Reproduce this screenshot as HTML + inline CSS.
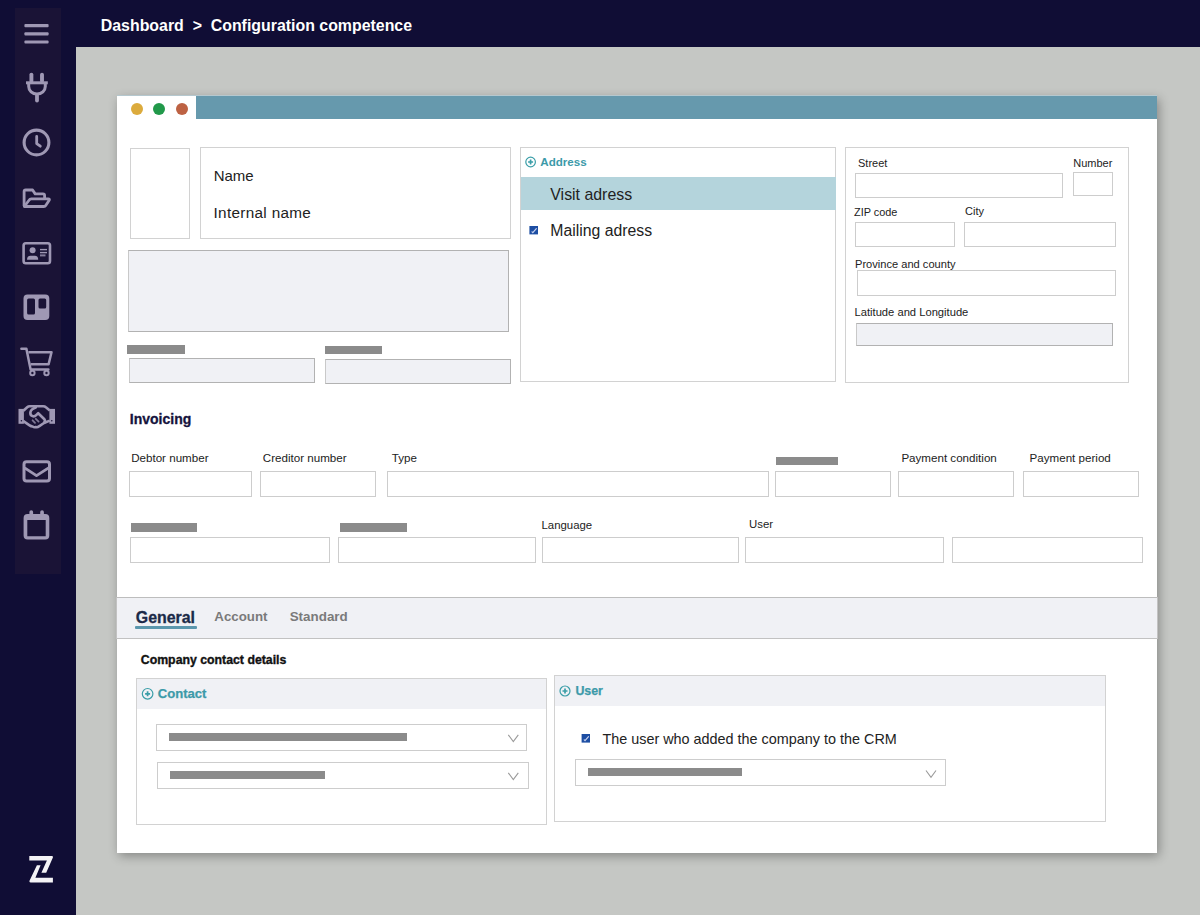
<!DOCTYPE html>
<html><head><meta charset="utf-8"><style>
html,body{margin:0;padding:0;width:1200px;height:915px;overflow:hidden;background:#100d35}
body div,body svg{position:absolute}
.t{font-family:"Liberation Sans",sans-serif;line-height:1;white-space:nowrap}
.b1{box-sizing:border-box;border:1px solid #d2d2d2;background:#fff}
.in{box-sizing:border-box;border:1.3px solid #cdcdcd;background:#fff}
.g2{box-sizing:border-box;border:1px solid #b2b2b2;border-left-color:#c9c9c9;background:#f0f1f5}
.lbar{background:#8b8b8b}
</style></head><body>
<div style="left:0.0px;top:0.0px;width:1200.0px;height:915.0px;background:#100d35"></div>
<div style="left:76.0px;top:47.0px;width:1124.0px;height:868.0px;background:#c5c7c4"></div>
<div style="left:15.0px;top:8.0px;width:46.0px;height:566.0px;background:#1a1336"></div>
<div class="t" style="left:100.8px;top:17.8px;font-size:15.9px;font-weight:700;color:#fff;">Dashboard&nbsp;&nbsp;&gt;&nbsp;&nbsp;Configuration competence</div>
<div style="left:117.0px;top:96.0px;width:1040.0px;height:757.0px;background:#fff;box-shadow:2px 3px 10px rgba(0,0,0,0.32)"></div>
<div style="left:196.0px;top:96.0px;width:961.0px;height:23.0px;background:#6699ad"></div>
<div style="left:117.0px;top:95.0px;width:1040.0px;height:1.0px;background:#b5c8cf"></div>
<div style="left:131.3px;top:102.7px;width:12.0px;height:12.0px;background:#dcab3d;border-radius:50%"></div>
<div style="left:153.3px;top:102.7px;width:12.0px;height:12.0px;background:#21994a;border-radius:50%"></div>
<div style="left:175.5px;top:102.7px;width:12.0px;height:12.0px;background:#bd6243;border-radius:50%"></div>
<div class="b1" style="left:130.0px;top:148.0px;width:60.0px;height:90.5px;"></div>
<div class="b1" style="left:200.0px;top:146.7px;width:310.7px;height:92.3px;"></div>
<div class="t" style="left:213.7px;top:168.1px;font-size:15px;font-weight:400;color:#222;">Name</div>
<div class="t" style="left:213.5px;top:204.5px;font-size:15.3px;font-weight:400;color:#222;letter-spacing:0.32px">Internal name</div>
<div class="g2" style="left:128.3px;top:250.0px;width:380.7px;height:82.2px;"></div>
<div class="lbar" style="left:127.4px;top:344.5px;width:57.4px;height:9.2px;"></div>
<div class="g2" style="left:128.7px;top:358.3px;width:186.0px;height:24.7px;"></div>
<div class="lbar" style="left:324.5px;top:345.6px;width:57.1px;height:8.9px;"></div>
<div class="g2" style="left:325.2px;top:359.2px;width:185.5px;height:24.5px;"></div>
<div class="b1" style="left:520.3px;top:146.5px;width:315.9px;height:235.4px;"></div>
<div style="left:520.5px;top:177.3px;width:315.0px;height:32.7px;background:#b4d4dc"></div>
<div class="t" style="left:540.3px;top:156.1px;font-size:11.6px;font-weight:700;color:#3c9aa9;">Address</div>
<div class="t" style="left:550.3px;top:186.5px;font-size:15.9px;font-weight:400;color:#222;">Visit adress</div>
<div class="t" style="left:550.3px;top:223.1px;font-size:15.8px;font-weight:400;color:#222;">Mailing adress</div>
<div class="b1" style="left:845.0px;top:146.7px;width:283.7px;height:236.6px;"></div>
<div class="t" style="left:858.0px;top:157.7px;font-size:11px;font-weight:400;color:#222;">Street</div>
<div class="in" style="left:855.3px;top:173.3px;width:207.9px;height:25.0px;"></div>
<div class="t" style="left:1073.2px;top:158.0px;font-size:11px;font-weight:400;color:#222;">Number</div>
<div class="in" style="left:1073.2px;top:172.2px;width:40.2px;height:23.6px;"></div>
<div class="t" style="left:854.0px;top:207.4px;font-size:10.9px;font-weight:400;color:#222;">ZIP code</div>
<div class="in" style="left:855.3px;top:222.4px;width:99.4px;height:24.3px;"></div>
<div class="t" style="left:965.0px;top:206.3px;font-size:11px;font-weight:400;color:#222;">City</div>
<div class="in" style="left:964.2px;top:221.7px;width:151.5px;height:25.5px;"></div>
<div class="t" style="left:855.0px;top:258.6px;font-size:11.1px;font-weight:400;color:#222;">Province and county</div>
<div class="in" style="left:857.0px;top:270.0px;width:258.8px;height:25.8px;"></div>
<div class="t" style="left:854.5px;top:307.2px;font-size:11.2px;font-weight:400;color:#222;">Latitude and Longitude</div>
<div class="g2" style="left:855.5px;top:323.0px;width:257.5px;height:23.2px;"></div>
<div class="t" style="left:129.8px;top:411.6px;font-size:14px;font-weight:700;color:#15133d;-webkit-text-stroke:0.3px #15133d">Invoicing</div>
<div class="t" style="left:131.2px;top:451.7px;font-size:11.6px;font-weight:400;color:#222;">Debtor number</div>
<div class="t" style="left:262.8px;top:451.7px;font-size:11.6px;font-weight:400;color:#222;">Creditor number</div>
<div class="t" style="left:391.8px;top:451.7px;font-size:11.6px;font-weight:400;color:#222;">Type</div>
<div class="t" style="left:901.4px;top:451.7px;font-size:11.6px;font-weight:400;color:#222;">Payment condition</div>
<div class="t" style="left:1029.6px;top:451.7px;font-size:11.6px;font-weight:400;color:#222;">Payment period</div>
<div class="lbar" style="left:775.9px;top:457.2px;width:61.8px;height:7.7px;"></div>
<div class="in" style="left:129.3px;top:471.3px;width:123.2px;height:26.2px;"></div>
<div class="in" style="left:259.5px;top:471.3px;width:116.5px;height:26.2px;"></div>
<div class="in" style="left:386.7px;top:471.3px;width:382.5px;height:26.2px;"></div>
<div class="in" style="left:775.4px;top:471.3px;width:115.5px;height:26.2px;"></div>
<div class="in" style="left:898.4px;top:471.3px;width:116.0px;height:26.2px;"></div>
<div class="in" style="left:1023.2px;top:471.3px;width:115.5px;height:26.2px;"></div>
<div class="lbar" style="left:131.0px;top:523.4px;width:65.6px;height:8.6px;"></div>
<div class="lbar" style="left:339.5px;top:523.4px;width:67.1px;height:8.6px;"></div>
<div class="t" style="left:541.5px;top:519.6px;font-size:11.4px;font-weight:400;color:#222;">Language</div>
<div class="t" style="left:749.0px;top:518.8px;font-size:11.4px;font-weight:400;color:#222;">User</div>
<div class="in" style="left:130.1px;top:537.2px;width:199.9px;height:26.2px;"></div>
<div class="in" style="left:338.3px;top:537.2px;width:197.4px;height:26.2px;"></div>
<div class="in" style="left:542.1px;top:537.2px;width:197.4px;height:26.2px;"></div>
<div class="in" style="left:745.3px;top:537.2px;width:198.5px;height:26.2px;"></div>
<div class="in" style="left:951.5px;top:537.2px;width:191.3px;height:26.2px;"></div>
<div style="left:116.0px;top:597.0px;width:1042.0px;height:41.5px;background:#f0f1f5;border:1px solid #c2c2c2;border-top-color:#bdbdbd;box-sizing:border-box"></div>
<div class="t" style="left:135.8px;top:609.5px;font-size:15.9px;font-weight:700;color:#1b2a48;-webkit-text-stroke:0.3px #1b2a48">General</div>
<div style="left:134.8px;top:626.0px;width:61.9px;height:3.0px;background:#5b97ad;border-radius:1px"></div>
<div class="t" style="left:214.3px;top:610.4px;font-size:13.3px;font-weight:700;color:#7a7a7a;">Account</div>
<div class="t" style="left:289.7px;top:610.3px;font-size:13.4px;font-weight:700;color:#7a7a7a;">Standard</div>
<div class="t" style="left:140.8px;top:653.8px;font-size:12.3px;font-weight:700;color:#111;-webkit-text-stroke:0.35px #111">Company contact details</div>
<div class="b1" style="left:136.2px;top:678.2px;width:410.8px;height:147.0px;"></div>
<div style="left:137.2px;top:679.2px;width:408.8px;height:29.4px;background:#f0f1f5"></div>
<div class="t" style="left:157.7px;top:687.4px;font-size:13.1px;font-weight:700;color:#3c9aa9;-webkit-text-stroke:0.25px #3c9aa9">Contact</div>
<div class="in" style="left:156.2px;top:724.3px;width:371.3px;height:26.9px;"></div>
<div class="lbar" style="left:169.2px;top:733.0px;width:238.1px;height:7.7px;"></div>
<div class="in" style="left:157.0px;top:762.4px;width:371.6px;height:26.4px;"></div>
<div class="lbar" style="left:170.0px;top:771.0px;width:155.4px;height:7.7px;"></div>
<div class="b1" style="left:554.3px;top:675.4px;width:551.9px;height:146.4px;"></div>
<div style="left:555.3px;top:676.4px;width:549.9px;height:29.2px;background:#f0f1f5"></div>
<div class="t" style="left:575.4px;top:685.2px;font-size:12.4px;font-weight:700;color:#3c9aa9;-webkit-text-stroke:0.25px #3c9aa9">User</div>
<div class="t" style="left:602.4px;top:731.8px;font-size:14.4px;font-weight:400;color:#222;">The user who added the company to the CRM</div>
<div class="in" style="left:574.7px;top:759.3px;width:371.3px;height:26.9px;"></div>
<div class="lbar" style="left:588.0px;top:768.2px;width:154.3px;height:7.5px;"></div>
<svg style="left:0;top:0" width="1200" height="915" viewBox="0 0 1200 915"><rect x="24.4" y="24" width="24.2" height="3.2" rx="1" fill="#9f98b4"/><rect x="24.4" y="32.3" width="24.2" height="3.2" rx="1" fill="#9f98b4"/><rect x="24.4" y="40.4" width="24.2" height="3.2" rx="1" fill="#9f98b4"/><line x1="31.4" y1="74.6" x2="31.4" y2="81" stroke="#9f98b4" stroke-width="3.9" stroke-linecap="round"/><line x1="42.0" y1="74.6" x2="42.0" y2="81" stroke="#9f98b4" stroke-width="3.9" stroke-linecap="round"/><rect x="26" y="81.3" width="21.8" height="3" fill="#9f98b4"/><path d="M28.7,84 V86.5 A8.3,7.6 0 0 0 45.3,86.5 V84" fill="none" stroke="#9f98b4" stroke-width="3"/><line x1="37" y1="95.5" x2="37" y2="100.6" stroke="#9f98b4" stroke-width="3.8" stroke-linecap="round"/><circle cx="36.5" cy="142.5" r="12.4" fill="none" stroke="#9f98b4" stroke-width="3.1"/><path d="M36.7,136.4 V143.6 L40.3,146.2" fill="none" stroke="#9f98b4" stroke-width="2.8" stroke-linecap="round" stroke-linejoin="round"/><path d="M24.1,206 V191.6 Q24.1,190 25.7,190 H32.6 L35.2,193.9 H43 Q44.6,193.9 44.6,195.5 V198.4" fill="none" stroke="#9f98b4" stroke-width="2.8" stroke-linejoin="round"/><path d="M24.3,206.5 L29.2,200 Q29.9,198.8 31.3,198.8 H48.3 Q49.9,198.8 49.2,200.3 L45.9,205.3 Q45.2,206.5 43.8,206.5 Z" fill="none" stroke="#9f98b4" stroke-width="2.8" stroke-linejoin="round"/><rect x="23.6" y="243.2" width="26.4" height="20.1" rx="2.2" fill="none" stroke="#9f98b4" stroke-width="2.6"/><circle cx="32.6" cy="250.2" r="3" fill="#9f98b4"/><path d="M27,259.8 Q27,255.8 30.5,255.8 H34.8 Q38.2,255.8 38.2,259.8 Z" fill="#9f98b4"/><rect x="40" y="248.9" width="7" height="1.4" fill="#9f98b4"/><rect x="40" y="251.9" width="7" height="1.4" fill="#9f98b4"/><rect x="40" y="254.4" width="5.5" height="2" fill="#9f98b4" opacity="0.8"/><path fill-rule="evenodd" fill="#9f98b4" d="M27.5,294.5 H45.3 Q49.3,294.5 49.3,298.5 V315.9 Q49.3,319.9 45.3,319.9 H27.5 Q23.5,319.9 23.5,315.9 V298.5 Q23.5,294.5 27.5,294.5 Z M28.6,298.5 Q27.1,298.5 27.1,300 V313.1 Q27.1,314.6 28.6,314.6 H33.5 Q35,314.6 35,313.1 V300 Q35,298.5 33.5,298.5 Z M40,298.5 Q38.5,298.5 38.5,300 V307 Q38.5,308.5 40,308.5 H44.7 Q46.2,308.5 46.2,307 V300 Q46.2,298.5 44.7,298.5 Z"/><path d="M21.4,348.8 H26.4 L30.6,369.4 H48.4" fill="none" stroke="#9f98b4" stroke-width="2.5" stroke-linecap="round" stroke-linejoin="round"/><path d="M28.4,352.3 H51.5 L48.6,364.2 H30.6" fill="none" stroke="#9f98b4" stroke-width="2.5" stroke-linejoin="round"/><circle cx="32.4" cy="373" r="2.2" fill="none" stroke="#9f98b4" stroke-width="2"/><circle cx="46.5" cy="373" r="2.2" fill="none" stroke="#9f98b4" stroke-width="2"/><rect x="18.5" y="408.9" width="5.4" height="14.9" fill="#9f98b4"/><rect x="49.4" y="408.9" width="5.6" height="14.9" fill="#9f98b4"/><circle cx="21.4" cy="420.8" r="0.8" fill="#1a1336"/><circle cx="51.8" cy="420.8" r="0.8" fill="#1a1336"/><path d="M23.4,410.8 L27.2,407.3 Q28.3,406.3 29.8,406.3 H43.2 Q44.8,406.3 45.9,407.3 L49.8,410.4" fill="none" stroke="#9f98b4" stroke-width="2.6" stroke-linejoin="round"/><path d="M23.4,421.2 L29.6,425.4 Q31,426.4 32.6,426.5 Q34.2,427.7 35.9,427.1 Q37.6,427.5 39,426.3 L44,423 L49.8,420.6" fill="none" stroke="#9f98b4" stroke-width="2.6" stroke-linejoin="round"/><path d="M35.8,407.4 Q31.2,408.8 30.4,412.2 Q29.9,415.6 33,416.3 Q34.8,416.6 36.2,415.2 L38.2,413.2 L44.4,419.2 Q45.6,420.8 44.2,422.6" fill="none" stroke="#9f98b4" stroke-width="2.6" stroke-linejoin="round" stroke-linecap="round"/><path d="M32.6,420.3 L35,422.8 M35.8,418.8 L38.6,421.6" fill="none" stroke="#9f98b4" stroke-width="1.8" stroke-linecap="round" opacity="0.75"/><rect x="24" y="461.7" width="25.5" height="19.4" rx="2.6" fill="none" stroke="#9f98b4" stroke-width="3"/><path d="M24.6,467.9 L36.5,475.6 L48.6,467.9" fill="none" stroke="#9f98b4" stroke-width="2.9" stroke-linejoin="round"/><path fill-rule="evenodd" fill="#9f98b4" d="M27.6,514.1 H45.3 Q49.3,514.1 49.3,518.1 V535.6 Q49.3,539.6 45.3,539.6 H27.6 Q23.6,539.6 23.6,535.6 V518.1 Q23.6,514.1 27.6,514.1 Z M27.3,520.1 V536.3 H45.7 V520.1 Z"/><line x1="31.25" y1="512" x2="31.25" y2="516" stroke="#9f98b4" stroke-width="3.7" stroke-linecap="round"/><line x1="42.05" y1="512" x2="42.05" y2="516" stroke="#9f98b4" stroke-width="3.7" stroke-linecap="round"/><path fill="#f4f3f6" d="M29.3,856.1 H52 Q53.4,856.1 52.9,857.6 L46.2,872.8 H41.4 L46.9,860.4 H29.3 Z"/><path fill="#f4f3f6" d="M36.9,865.2 H40.6 L35.4,877.7 H52.9 V882.5 H30.6 Q28.9,882.5 29.5,880.8 Z"/><circle cx="530.6" cy="162" r="4.8" fill="none" stroke="#3a9ea8" stroke-width="1.2"/><path d="M528.1,162 H533.1 M530.6,159.5 V164.5" stroke="#3a9ea8" stroke-width="1.7"/><circle cx="147.6" cy="693.8" r="5.3" fill="none" stroke="#3a9ea8" stroke-width="1.2"/><path d="M145.1,693.8 H150.1 M147.6,691.3 V696.3" stroke="#3a9ea8" stroke-width="1.7"/><circle cx="565" cy="691" r="5.0" fill="none" stroke="#3a9ea8" stroke-width="1.2"/><path d="M562.5,691 H567.5 M565,688.5 V693.5" stroke="#3a9ea8" stroke-width="1.7"/><rect x="529.4" y="226" width="8.600000000000023" height="8.400000000000006" fill="#1d4ea3"/><path d="M532.0,231.9 L532.8,232.6 L536.3,228.6" fill="none" stroke="#c9d3f0" stroke-width="1.2" stroke-linecap="round"/><rect x="581.6" y="734" width="8.399999999999977" height="8.600000000000023" fill="#1d4ea3"/><path d="M584.2,739.9 L585.0,740.6 L588.5,736.6" fill="none" stroke="#c9d3f0" stroke-width="1.2" stroke-linecap="round"/><path d="M508.3,734.8 L513.3,741.6 L518.3,734.8" fill="none" stroke="#9a9a9a" stroke-width="1.1"/><path d="M508.3,772.8 L513.3,779.6 L518.3,772.8" fill="none" stroke="#9a9a9a" stroke-width="1.1"/><path d="M926,770.5 L931.0,777.3 L936,770.5" fill="none" stroke="#9a9a9a" stroke-width="1.1"/></svg>
</body></html>
